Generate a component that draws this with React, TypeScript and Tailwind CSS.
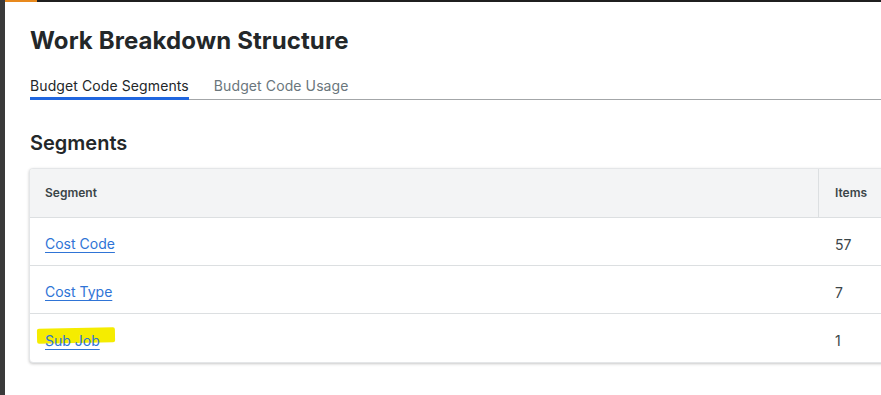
import React from 'react';

const rows = [
  { name: 'Cost Code', items: 57 },
  { name: 'Cost Type', items: 7 },
  { name: 'Sub Job', items: 1, marked: true },
];

export default function App() {
  return (
    <div className="w-[881px] h-[395px] overflow-hidden bg-white flex font-['Inter',sans-serif]">
      {/* left app rail edge */}
      <div className="w-[5px] flex-none bg-[#3a3a3a]" />

      <div className="flex-1 min-w-0 flex flex-col">
        <div className="h-[2px] flex-none flex">
          <div className="w-[32px] bg-[#e8891d]" />
          <div className="flex-1 bg-[#1f1f1f]" />
        </div>

        <div className="pl-[25px] pt-[24px]">
          <h1 className="text-[24px] leading-[30px] font-bold text-[#232729] tracking-[0.1px]">
            Work Breakdown Structure
          </h1>

          <div className="mt-[20px] flex gap-[25px] border-b border-[#a3a6a8] w-[900px]">
            <div className="pb-[1px] -mb-px border-b-[3px] border-[#2066df] text-[14px] leading-[20px] text-[#232729] tracking-[0.1px]">
              Budget Code Segments
            </div>
            <div className="pb-[1px] text-[14px] leading-[20px] text-[#6a767c] tracking-[0.1px]">Budget Code Usage</div>
          </div>

          <h2 className="mt-[30px] text-[20px] leading-[26px] font-semibold text-[#232729]">Segments</h2>

          <div className="mt-[12px] -ml-px w-[900px] rounded-[4px] bg-white border border-[#e4e6e8] shadow-[0_1px_3px_rgba(0,0,0,0.22)] overflow-hidden">
            <div className="grid grid-cols-[788px_1fr] h-[49px] bg-[#f3f4f5] border-b border-[#dcdfe1]">
              <div className="flex items-center pl-[15px] text-[12px] font-semibold text-[#3b4548]">Segment</div>
              <div className="flex items-center pl-[16px] border-l border-[#dcdfe1] text-[12px] font-semibold text-[#3b4548]">
                Items
              </div>
            </div>
            {rows.map((r, i) => (
              <div
                key={r.name}
                className={`grid grid-cols-[788px_1fr] h-[48px] ${i < rows.length - 1 ? 'border-b border-[#dcdfe1]' : ''}`}
              >
                <div className="flex items-center pl-[15px] pt-[4px]">
                  <span className="relative text-[14px] text-[#2f74d6] underline underline-offset-[3px]">
                    {r.marked && (
                      <span className="absolute left-[-8px] top-[-2px] w-[78px] h-[15px] bg-[#f5ec00] -rotate-[1deg] rounded-[2px]" />
                    )}
                    <span className="relative">{r.name}</span>
                  </span>
                </div>
                <div className="flex items-center pl-[17px] pt-[5px] text-[14px] text-[#3b4548]">{r.items}</div>
              </div>
            ))}
          </div>
        </div>
      </div>
    </div>
  );
}
